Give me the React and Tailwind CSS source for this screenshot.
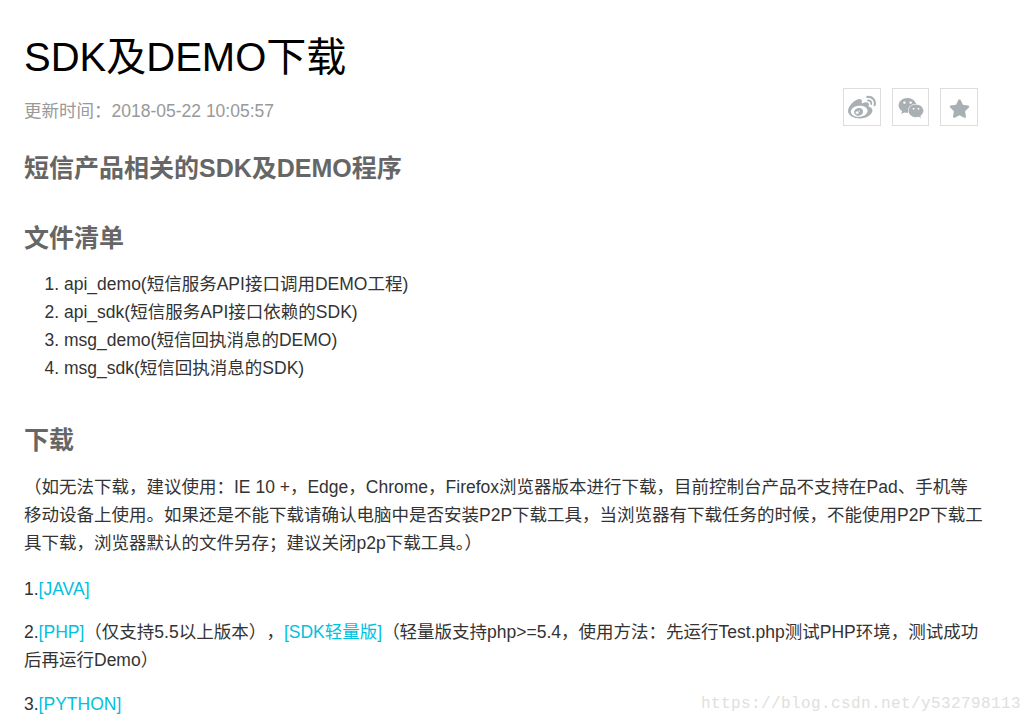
import { FaWeibo, FaWeixin, FaStar } from "react-icons/fa";

const F = "font-['Liberation_Sans','Noto_Sans_CJK_SC',sans-serif]";
const L = "text-[#00c1de]";
const BOX = "flex h-[38px] items-center justify-center border border-[#dddddd] text-[#a9b0b4]";

export default function App() {
  return (
    <div className={"relative h-[723px] w-[1032px] overflow-hidden bg-white text-[17.5px] leading-[28px] text-[#333333] " + F}>
      <div className="w-[984px] pl-6 pt-[31px]">
        <h1 className="text-[40px] leading-[52px] font-normal text-black">SDK及DEMO下载</h1>
        <div className="mt-[4px] flex h-[40px] items-center justify-between pr-[6px]">
          <span className="mt-[-1px] self-start pt-[11px] text-[#999999]">更新时间：2018-05-22 10:05:57</span>
          <div className="flex items-center gap-[11px]">
            <div className={BOX + " w-[38px]"}><FaWeibo size={28} className="mt-[2px]" /></div>
            <div className={BOX + " w-[37px]"}><FaWeixin size={26} className="mt-[1px]" /></div>
            <div className={BOX + " w-[38px]"}><FaStar size={21} className="mt-[2px]" /></div>
          </div>
        </div>
        <h3 className="mt-[23px] text-[25px] leading-[36px] font-bold text-[#666666]">短信产品相关的SDK及DEMO程序</h3>
        <h3 className="mt-[34px] text-[25px] leading-[36px] font-bold text-[#666666]">文件清单</h3>
        <ol className="mt-[14px] list-decimal pl-10">
          <li>api_demo(短信服务API接口调用DEMO工程)</li>
          <li>api_sdk(短信服务API接口依赖的SDK)</li>
          <li>msg_demo(短信回执消息的DEMO)</li>
          <li>msg_sdk(短信回执消息的SDK)</li>
        </ol>
        <h3 className="mt-[40px] text-[25px] leading-[36px] font-bold text-[#666666]">下载</h3>
        <p className="mt-[15px]">（如无法下载，建议使用：IE 10 +，Edge，Chrome，Firefox浏览器版本进行下载，目前控制台产品不支持在Pad、手机等移动设备上使用。如果还是不能下载请确认电脑中是否安装P2P下载工具，当浏览器有下载任务的时候，不能使用P2P下载工具下载，浏览器默认的文件另存；建议关闭p2p下载工具。）</p>
        <p className="mt-[18px]">1.<span className={L}>[JAVA]</span></p>
        <p className="mt-[15px]">2.<span className={L}>[PHP]</span>（仅支持5.5以上版本）<span className="ml-[9px]">，</span><span className={L}>[SDK轻量版]</span>（轻量版支持php&gt;=5.4，使用方法：先运行Test.php测试PHP环境，测试成功后再运行Demo）</p>
        <p className="mt-[16px]">3.<span className={L}>[PYTHON]</span></p>
      </div>
      <div className="absolute left-[701px] top-[692px] font-['Liberation_Mono',monospace] text-[16px] leading-[24px] tracking-[0.4px] text-[#e0e0dc]">https://blog.csdn.net/y532798113</div>
    </div>
  );
}
